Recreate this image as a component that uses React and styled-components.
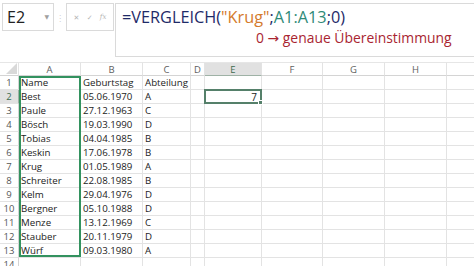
import React from "react";
import styled, { createGlobalStyle } from "styled-components";

const Global = createGlobalStyle`
  html, body { margin: 0; padding: 0; background: #fff; }
  body { font-family: "Open Sans", "Noto Sans", "DejaVu Sans", sans-serif; }
  * { box-sizing: border-box; }
`;

const Page = styled.div`
  width: 474px;
  height: 266px;
  overflow: hidden;
  display: flex;
  flex-direction: column;
  background: #fff;
`;

const TopBar = styled.div`
  height: 62px;
  flex: none;
  display: flex;
  align-items: flex-start;
  padding: 3px 0 0 2px;
`;

const NameBox = styled.div`
  position: relative;
  width: 52px;
  height: 28px;
  border: 1px solid #dadada;
  display: flex;
  align-items: center;
  padding-left: 4px;
  font-size: 16px;
  color: #222;
`;

const Caret = styled.span`
  position: absolute;
  right: 4px;
  top: 9px;
  font-size: 6px;
  color: #a0a0a0;
`;

const Sep = styled.div`
  width: 12px;
  height: 28px;
  display: flex;
  align-items: center;
  justify-content: center;
  font-size: 8px;
  color: #cfcfcf;
`;

const FnBox = styled.div`
  width: 48px;
  height: 28px;
  border: 1px solid #dadada;
  display: flex;
  align-items: center;
  justify-content: space-around;
  padding: 0 3px;
  font-size: 7px;
  color: #b5b5b5;
`;

const FxMark = styled.i`
  font-family: "DejaVu Serif", serif;
  font-size: 7px;
`;

const FormulaBox = styled.div`
  flex: 1;
  height: 54px;
  margin-left: 1px;
  border: 1px solid #dadada;
  border-right: none;
  padding: 0 0 0 6px;
  display: flex;
  flex-direction: column;
`;

const FormulaLine = styled.div`
  font-size: 16.3px;
  line-height: 20px;
  margin-top: 3px;
  color: #1e2a68;
  white-space: nowrap;
`;

const Part = styled.span`
  color: ${(p) => p.$c};
`;

const Note = styled.div`
  font-size: 13.9px;
  line-height: 18px;
  margin-top: 2px;
  padding-left: 134px;
  color: #a92531;
  white-space: nowrap;
`;

const Sheet = styled.div`
  display: grid;
  grid-template-columns: 19px 62px 62px 48px 14px 57px 61px 62px 62px 62px;
  grid-auto-rows: 14px;
  font-size: 9.7px;
  color: #222;
  width: 474px;
  overflow: hidden;
`;

const Cell = styled.div`
  grid-row: ${(p) => p.$r};
  grid-column: ${(p) => p.$c};
  border-right: 1px solid #e3e3e3;
  border-bottom: 1px solid #e3e3e3;
  display: flex;
  align-items: center;
  justify-content: flex-start;
  padding: 0 0 0 2px;
  white-space: nowrap;
  overflow: hidden;
`;

const ColHead = styled.div`
  grid-row: 1;
  grid-column: ${(p) => p.$c};
  display: flex;
  align-items: center;
  justify-content: center;
  color: ${(p) => (p.$active ? "#3d6b4f" : "#606060")};
  background: ${(p) => (p.$active ? "#e1e1e1" : "#fff")};
  border-top: 1px solid #e6e6e6;
  border-right: 1px solid #e3e3e3;
  border-bottom: 1px solid ${(p) => (p.$active ? "#9fb2a6" : "#d4d4d4")};
  font-size: 9.5px;
`;

const Corner = styled.div`
  grid-row: 1;
  grid-column: 1;
  border-top: 1px solid #e6e6e6;
  border-right: 1px solid #e3e3e3;
  border-bottom: 1px solid #d4d4d4;
  display: flex;
  align-items: flex-end;
  justify-content: flex-end;
  padding: 0 1px 1px 0;
`;

const RowHead = styled.div`
  grid-row: ${(p) => p.$r};
  grid-column: 1;
  display: flex;
  align-items: center;
  justify-content: center;
  color: ${(p) => (p.$active ? "#3d6b4f" : "#555")};
  background: ${(p) => (p.$active ? "#e1e1e1" : "#fff")};
  border-right: 1px solid ${(p) => (p.$active ? "#9fb2a6" : "#d4d4d4")};
  border-bottom: 1px solid #e3e3e3;
  font-size: 9.5px;
`;

const RangeBox = styled.div`
  grid-row: 2 / span 13;
  grid-column: 2;
  border: 2px solid #33925f;
  margin: 0 0 1px 0;
  pointer-events: none;
  z-index: 2;
`;

const ActiveBox = styled.div`
  grid-row: 3;
  grid-column: 6;
  position: relative;
  border: 2px solid #55806a;
  margin: -1px 0 0 -1px;
  display: flex;
  align-items: center;
  justify-content: flex-end;
  padding-right: 3px;
  z-index: 2;
  font-size: 10px;
  background: #fff;
`;

const FillHandle = styled.span`
  position: absolute;
  right: -3px;
  bottom: -3px;
  width: 5px;
  height: 5px;
  background: #55806a;
  border: 1px solid #fff;
`;

// last column lies mostly beyond the right edge; its letter is not in view
const cols = ["A", "B", "C", "D", "E", "F", "G", "H", ""];

const data = [
  ["Name", "Geburtstag", "Abteilung"],
  ["Best", "05.06.1970", "A"],
  ["Paule", "27.12.1963", "C"],
  ["Bösch", "19.03.1990", "D"],
  ["Tobias", "04.04.1985", "B"],
  ["Keskin", "17.06.1978", "B"],
  ["Krug", "01.05.1989", "A"],
  ["Schreiter", "22.08.1985", "B"],
  ["Kelm", "29.04.1976", "D"],
  ["Bergner", "05.10.1988", "D"],
  ["Menze", "13.12.1969", "C"],
  ["Stauber", "20.11.1979", "D"],
  ["Würf", "09.03.1980", "A"],
  ["", "", ""],
];

export default function App() {
  return (
    <Page>
      <Global />
      <TopBar>
        <NameBox>
          E2
          <Caret>▼</Caret>
        </NameBox>
        <Sep>⋮</Sep>
        <FnBox>
          <span>✕</span>
          <span>✓</span>
          <FxMark>fx</FxMark>
        </FnBox>
        <FormulaBox>
          <FormulaLine>
            =VERGLEICH(
            <Part $c="#d47a2c">"Krug"</Part>;
            <Part $c="#2f8a78">A1:A13</Part>;0)
          </FormulaLine>
          <Note>0 → genaue Übereinstimmung</Note>
        </FormulaBox>
      </TopBar>
      <Sheet>
        <Corner>
          <svg width="11" height="11" viewBox="0 0 11 11">
            <polygon points="11,0 11,11 0,11" fill="#d9d9d9" />
          </svg>
        </Corner>
        {cols.map((c, i) => (
          <ColHead key={i} $c={i + 2} $active={c === "E"}>
            {c}
          </ColHead>
        ))}
        {data.map((row, ri) => {
          const r = ri + 2;
          return (
            <React.Fragment key={ri}>
              <RowHead $r={r} $active={ri === 1}>
                {ri + 1}
              </RowHead>
              {cols.map((c, ci) =>
                ri === 1 && c === "E" ? null : (
                  <Cell key={ci} $r={r} $c={ci + 2}>
                    {row[ci] || ""}
                  </Cell>
                )
              )}
            </React.Fragment>
          );
        })}
        <RangeBox />
        <ActiveBox>
          7
          <FillHandle />
        </ActiveBox>
      </Sheet>
    </Page>
  );
}
